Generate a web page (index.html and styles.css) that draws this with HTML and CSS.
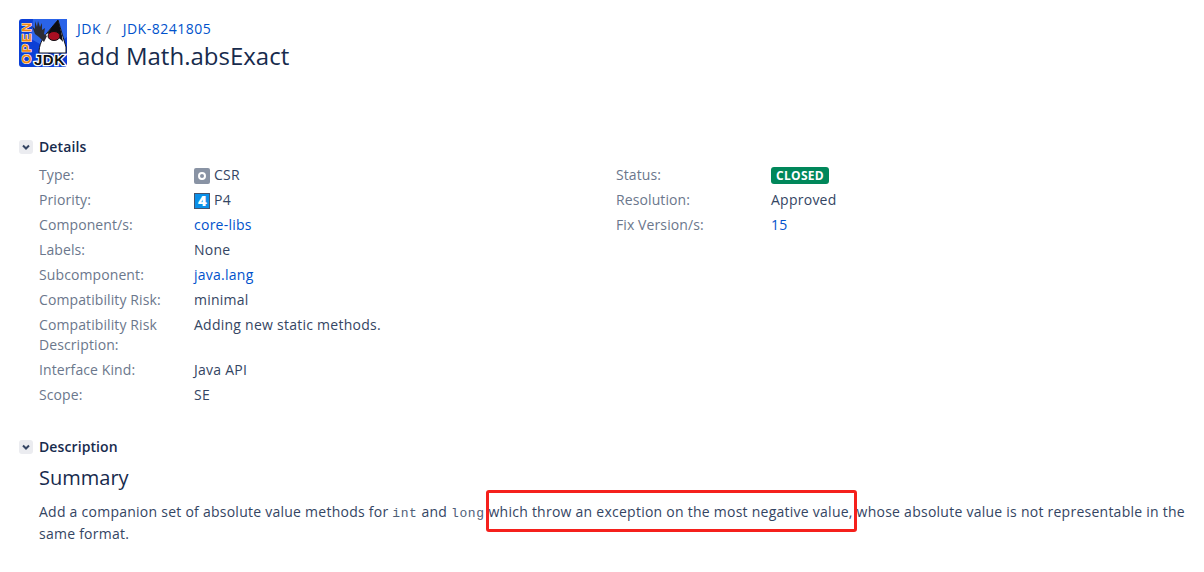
FILE: index.html
```html
<!DOCTYPE html>
<html lang="en">
<head>
<meta charset="UTF-8">
<meta name="viewport" content="width=device-width, initial-scale=1.0">
<title>add Math.absExact</title>
<link rel="stylesheet" href="styles.css">
</head>
<body>

<!-- Issue header -->
<div class="issue-header">
    <svg class="avatar" width="48" height="48" viewBox="0 0 48 48">
        <rect width="48" height="48" rx="3" fill="#0b3fd6"/>
        <path d="M14 0H48V18L30 30L12 20Z" fill="#2a63e8"/>
        <path d="M20 34C20 26 23 20 28 14L39 1L47 28V34Z" fill="#fff" stroke="#15151c" stroke-width="1"/>
        <path d="M28 15C31 10 35 5 39 1C41 8 43 15 44 23C40 18 33 14 28 15Z" fill="#0d0d12"/>
        <ellipse cx="35" cy="17" rx="6" ry="4.5" fill="#a80f22" stroke="#0d0d12"/>
        <path d="M16 2L18 8L19 2L21 8L23 4L23 11L26 9L25 15L28 17L25 23L20 18L16 15L13 7L16 10Z" fill="#2b2b33"/>
        <text class="avatar-open" transform="translate(12 45) rotate(-90)">OPEN</text>
        <text class="avatar-jdk" x="15" y="46">JDK</text>
    </svg>
    <div class="issue-titles">
        <div class="breadcrumbs">
            <a href="#">JDK</a><span class="sep">/</span><a href="#">JDK-8241805</a>
        </div>
        <h1>add Math.absExact</h1>
    </div>
</div>

<!-- Details -->
<div class="module details">
    <div class="module-head">
        <span class="toggle"><svg width="10" height="10" viewBox="0 0 10 10"><path d="M2 3.5L5 6.5L8 3.5" fill="none" stroke="#344563" stroke-width="2"/></svg></span>
        <h4>Details</h4>
    </div>
    <div class="detail-cols">
        <div class="detail-col">
            <div class="row"><div class="name">Type:</div><div class="value"><span class="icon-type"><i></i></span>CSR</div></div>
            <div class="row"><div class="name">Priority:</div><div class="value"><span class="icon-priority">4</span>P4</div></div>
            <div class="row"><div class="name">Component/s:</div><div class="value"><a href="#">core-libs</a></div></div>
            <div class="row"><div class="name">Labels:</div><div class="value">None</div></div>
            <div class="row"><div class="name">Subcomponent:</div><div class="value"><a href="#">java.lang</a></div></div>
            <div class="row"><div class="name">Compatibility Risk:</div><div class="value">minimal</div></div>
            <div class="row"><div class="name">Compatibility Risk Description:</div><div class="value">Adding new static methods.</div></div>
            <div class="row"><div class="name">Interface Kind:</div><div class="value">Java API</div></div>
            <div class="row"><div class="name">Scope:</div><div class="value">SE</div></div>
        </div>
        <div class="detail-col">
            <div class="row"><div class="name">Status:</div><div class="value"><span class="lozenge">Closed</span></div></div>
            <div class="row"><div class="name">Resolution:</div><div class="value">Approved</div></div>
            <div class="row"><div class="name">Fix Version/s:</div><div class="value"><a href="#">15</a></div></div>
        </div>
    </div>
</div>

<!-- Description -->
<div class="module description">
    <div class="module-head">
        <span class="toggle"><svg width="10" height="10" viewBox="0 0 10 10"><path d="M2 3.5L5 6.5L8 3.5" fill="none" stroke="#344563" stroke-width="2"/></svg></span>
        <h4>Description</h4>
    </div>
    <div class="description-body">
        <h2>Summary</h2>
        <p>Add a companion set of absolute value methods for <code>int</code> and <code>long</code> <span class="marked">which throw an exception on the most negative value,</span> whose absolute value is not representable in the same format.</p>
    </div>
</div>

</body>
</html>
```

FILE: styles.css
```css
body {
    margin: 0;
    background: #fff;
    color: #172b4d;
    font-family: "Open Sans", "Noto Sans", sans-serif;
    font-size: 14px;
    line-height: 20px;
}

a {
    color: #0052cc;
    text-decoration: none;
}

.issue-header {
    display: flex;
    gap: 10px;
    padding: 19px 0 0 19px;
}

.avatar {
    display: block;
    flex: none;
}

.avatar-open {
    font-family: "Liberation Sans", sans-serif;
    font-size: 13px;
    font-weight: bold;
    letter-spacing: 1.5px;
    fill: #f28a12;
    stroke: #fff;
    stroke-width: 1px;
    paint-order: stroke;
}

.avatar-jdk {
    font-family: "Liberation Sans", sans-serif;
    font-size: 15px;
    font-weight: bold;
    letter-spacing: 0.5px;
    fill: #111;
    stroke: #fff;
    stroke-width: 2.5px;
    paint-order: stroke;
}

.breadcrumbs {
    height: 20px;
    letter-spacing: 0.5px;
}

.breadcrumbs .sep {
    color: #6b778c;
    margin: 0 11px 0 5px;
}

.issue-titles h1 {
    margin: 1px 0 0;
    font-size: 24px;
    line-height: 32px;
    font-weight: 400;
}

.module-head {
    display: flex;
    align-items: center;
    gap: 6px;
    padding-left: 19px;
    height: 20px;
}

.module-head h4 {
    margin: 0;
    font-size: 14px;
    font-weight: 600;
    letter-spacing: 0.1px;
}

.toggle {
    display: flex;
    align-items: center;
    justify-content: center;
    width: 14px;
    height: 14px;
    border-radius: 3px;
    background: #ebecf0;
}

.details {
    margin-top: 65px;
}

.detail-cols {
    display: flex;
    padding: 8px 0 0 39px;
}

.detail-col {
    width: 577px;
}

.row {
    display: flex;
    padding-bottom: 5px;
}

.name {
    width: 155px;
    padding-right: 10px;
    box-sizing: border-box;
    color: #6b778c;
    letter-spacing: 0.1px;
}

.value {
    flex: 1;
    display: flex;
    align-items: center;
    height: 20px;
    color: #344563;
    letter-spacing: 0.25px;
}

.icon-type {
    display: flex;
    align-items: center;
    justify-content: center;
    width: 16px;
    height: 16px;
    margin: 2px 4px 0 0;
    border-radius: 2px;
    background: #8993a4;
}

.icon-type i {
    width: 8px;
    height: 8px;
    box-sizing: border-box;
    border: 2px solid #fff;
    border-radius: 50%;
}

.icon-priority {
    width: 16px;
    height: 16px;
    margin: 2px 4px 0 0;
    box-sizing: border-box;
    border: 1px solid #44546f;
    background: #0a8fe8;
    color: #fff;
    font-family: "Liberation Sans", sans-serif;
    font-size: 14px;
    font-weight: bold;
    line-height: 14px;
    text-align: center;
    letter-spacing: 0;
    text-shadow: 1px 0 0 #fff;
}

.lozenge {
    padding: 0 5px;
    border-radius: 3px;
    background: #00875a;
    color: #fff;
    font-size: 12px;
    font-weight: 700;
    line-height: 17px;
    letter-spacing: 0.3px;
    text-transform: uppercase;
}

.description {
    margin-top: 27px;
}

.description-body {
    padding: 0 10px 0 39px;
}

.description-body h2 {
    margin: 7px 0 0;
    font-size: 20px;
    line-height: 28px;
    font-weight: 400;
    color: #172b4d;
}

.description-body p {
    margin: 9px 0 0;
    line-height: 22px;
    color: #344563;
    letter-spacing: 0.25px;
}

code {
    font-family: "Liberation Mono", monospace;
    font-size: 13px;
    line-height: 1;
    letter-spacing: 0.6px;
    color: #505f79;
}

.marked {
    position: relative;
}

.marked::after {
    content: "";
    position: absolute;
    left: -2px;
    right: -4px;
    top: -12px;
    bottom: -11px;
    border: 3px solid #f5201c;
    border-radius: 3px;
}
```
